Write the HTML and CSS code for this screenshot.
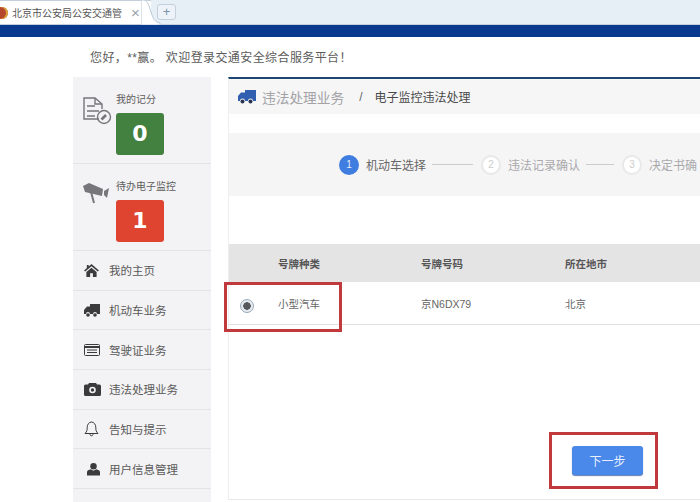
FILE: index.html
```html
<!DOCTYPE html>
<html lang="zh-CN">
<head>
	<meta charset="UTF-8">
	<title>北京市公安局公安交通管理局</title>
	<link rel="stylesheet" href="styles.css">
</head>
<body>
	<div class="tabbar">
		<div class="tab">
			<span class="favicon"></span>
			<span class="tab-title">北京市公安局公安交通管</span>
			<span class="tab-close">×</span>
			<svg class="tab-curve" width="20" height="25" viewBox="0 0 20 25"><path d="M0 0 H3 C7 1 8 6 10 12 C12 19 14 22 19 23 V25 H0 Z" fill="#fff" stroke="#b9c9d8"/></svg>
		</div>
		<div class="tab-new">+</div>
	</div>
	<div class="band"></div>
	<div class="welcome">您好，**赢。 欢迎登录交通安全综合服务平台！</div>

	<div class="page">
		<div class="side">
			<div class="stat">
				<svg class="stat-icon" width="30" height="32" viewBox="0 0 30 32" fill="none" stroke="#77767a" stroke-width="1.4">
					<path d="M17 23 H2 V2 H13 L20 8 V13"/>
					<path d="M13 2 V8 H20"/>
					<path d="M5 10 H13 M5 15 H17 M5 20 H13"/>
					<circle cx="22" cy="21" r="6.5"/>
					<path d="M19.5 23.5 L24 19" stroke-width="2.6"/>
				</svg>
				<div class="stat-body">
					<div class="stat-label">我的记分</div>
					<div class="stat-num green">0</div>
				</div>
			</div>
			<div class="stat">
				<svg class="stat-icon" width="30" height="32" viewBox="0 0 30 32">
					<path d="M1 3 L7 0 L21 6 L20 13 L3 9 Z" fill="#77767a"/>
					<path d="M9 9 L12 20" stroke="#77767a" stroke-width="2"/>
					<path d="M22 8 L27 5 L25 15 L22 12 Z" fill="#77767a"/>
				</svg>
				<div class="stat-body">
					<div class="stat-label">待办电子监控</div>
					<div class="stat-num red">1</div>
				</div>
			</div>
			<ul class="menu">
				<li>
					<svg width="15" height="13" viewBox="0 0 16 14"><path d="M8 0 L16 7 L14.800 8 L8 2.500 L1.200 8 L0 7 L3 4.400 V1 H5 V2.700 Z M8 4 L13.500 8.500 V14 H9.500 V10 H6.500 V14 H2.500 V8.500 Z" fill="#3b3b3d"/></svg>
					<span>我的主页</span>
				</li>
				<li>
					<svg width="16" height="13" viewBox="0 0 16 13"><path d="M6 0 H16 V10 H13 A2 2 0 0 0 9 10 H6 A2 2 0 0 0 2 10 H0 V6 L3 2.500 H6 Z" fill="#3b3b3d"/><circle cx="4" cy="11" r="1.800" fill="#3b3b3d"/><circle cx="11" cy="11" r="1.800" fill="#3b3b3d"/></svg>
					<span>机动车业务</span>
				</li>
				<li>
					<svg width="16" height="12" viewBox="0 0 16 12" fill="none" stroke="#3b3b3d"><rect x=".5" y=".5" width="15" height="11" rx="1"/><path d="M1 3 H15" stroke-width="2"/><path d="M3 6 H13 M3 8.500 H13"/></svg>
					<span>驾驶证业务</span>
				</li>
				<li>
					<svg width="17" height="14" viewBox="0 0 17 14"><path d="M5 1 H12 L13 2.500 H15.500 A1.500 1.500 0 0 1 17 4 V12.500 A1.500 1.500 0 0 1 15.500 14 H1.500 A1.500 1.500 0 0 1 0 12.500 V4 A1.500 1.500 0 0 1 1.500 2.500 H4 Z" fill="#3b3b3d"/><circle cx="8.500" cy="8" r="3.300" fill="#f3f2f4"/><circle cx="8.500" cy="8" r="1.700" fill="#3b3b3d"/></svg>
					<span>违法处理业务</span>
				</li>
				<li>
					<svg width="15" height="16" viewBox="0 0 15 16" fill="none" stroke="#3b3b3d"><path d="M1 12.500 C3 10.500 3.200 9 3.200 6.500 C3.200 3.500 5 1 7.500 1 C10 1 11.800 3.500 11.800 6.500 C11.800 9 12 10.500 14 12.500 Z"/><path d="M6 13 C6 15.500 9 15.500 9 13"/></svg>
					<span>告知与提示</span>
				</li>
				<li>
					<svg class="user" width="13" height="14" viewBox="0 0 14 14"><circle cx="7" cy="4" r="3.500" fill="#3b3b3d"/><path d="M0 14 V10.500 C0 8.500 2 7.800 4 7.300 L7 9 L10 7.300 C12 7.800 14 8.500 14 10.500 V14 Z" fill="#3b3b3d"/></svg>
					<span>用户信息管理</span>
				</li>
			</ul>
		</div>

		<div class="main">
			<div class="crumb">
				<svg width="18" height="14" viewBox="0 0 18 14"><path d="M7 0 H18 V11 H15 A2.500 2.500 0 0 0 10 11 H7 A2.500 2.500 0 0 0 2 11 H0 V6 L3 2.500 H7 Z" fill="#2f5fae"/><circle cx="4.500" cy="11.500" r="2" fill="#27344d"/><circle cx="12.500" cy="11.500" r="2" fill="#27344d"/></svg>
				<span class="crumb-parent">违法处理业务</span>
				<span class="crumb-sep">/</span>
				<span class="crumb-cur">电子监控违法处理</span>
			</div>
			<div class="steps">
				<span class="step-dot on">1</span><span class="step-txt on">机动车选择</span><span class="step-line long"></span>
				<span class="step-dot">2</span><span class="step-txt">违法记录确认</span><span class="step-line"></span>
				<span class="step-dot">3</span><span class="step-txt">决定书确</span>
			</div>
			<div class="tbl">
				<div class="tbl-head">
					<span class="col1">号牌种类</span><span class="col2">号牌号码</span><span>所在地市</span>
				</div>
				<div class="tbl-row">
					<span class="radio"></span>
					<span class="col1 first">小型汽车</span><span class="col2">京N6DX79</span><span>北京</span>
				</div>
				<div class="mark mark-row"></div>
			</div>
			<div class="actions">
				<button class="next">下一步</button>
				<div class="mark mark-btn"></div>
			</div>
		</div>
	</div>
</body>
</html>
```

FILE: styles.css
```css
*{
	margin: 0;
	padding: 0;
	box-sizing: border-box;
	list-style: none;
}
html,body{
	height: 502px;
	overflow: hidden;
}
body{
	width: 700px;
	background: #fff;
	font-family: "Liberation Sans", "Noto Sans CJK SC", sans-serif;
	color: #555;
}
.tabbar{
	height: 25px;
	background: #e6eff6;
	border-bottom: 1px solid #c3d0dc;
	display: flex;
	align-items: flex-end;
}
.tab{
	width: 151px;
	height: 24px;
	background: #fff;
	display: flex;
	align-items: center;
	position: relative;
	border-top: 1px solid #c3d0dc;
}
.favicon{
	width: 8px;
	height: 12px;
	margin-right: 4px;
	background: #b5482c;
	border-radius: 0 6px 6px 0;
	box-shadow: inset -2px 0 0 #d9a33c;
}
.tab-title{
	font-size: 10px;
	white-space: nowrap;
	color: #555;
}
.tab-close{
	margin-left: 9px;
	font-size: 15px;
	line-height: 1;
	color: #9aa3ab;
}
.tab-curve{
	position: absolute;
	left: 141px;
	top: -1px;
}
.tab-new{
	width: 19px;
	height: 16px;
	margin: 0 0 4px 6px;
	border: 1px solid #c3d0dc;
	border-radius: 3px;
	background: #edf3f8;
	color: #7d94a8;
	font-size: 13px;
	line-height: 13px;
	text-align: center;
}
.band{
	height: 12px;
	background: #0a3a8e;
}
.welcome{
	height: 40px;
	padding: 13px 0 0 90px;
	font-size: 12px;
	line-height: 17px;
	letter-spacing: .4px;
	color: #5b5b5b;
}
.page{
	display: flex;
	height: 425px;
	padding-left: 73px;
}
.side{
	width: 138px;
	background: #f3f2f4;
	flex-shrink: 0;
}
.stat{
	height: 87px;
	display: flex;
	padding: 16px 0 0 9px;
	border-bottom: 1px solid #e4e3e5;
}
.stat-body{
	margin-left: 4px;
}
.stat-label{
	font-size: 10px;
	line-height: 14px;
	color: #5d5d5d;
	white-space: nowrap;
}
.stat-num{
	width: 48px;
	height: 42px;
	margin-top: 6px;
	border-radius: 3px;
	color: #fff;
	font-family: "DejaVu Sans", sans-serif;
	font-size: 22px;
	font-weight: bold;
	line-height: 42px;
	text-align: center;
}
.green{
	background: #42813f;
}
.red{
	background: #df4431;
}
.stat-icon{
	flex-shrink: 0;
	margin-top: 3px;
}
.menu li{
	height: 39.7px;
	display: grid;
	grid-template-columns: 25px 1fr;
	align-items: center;
	padding-left: 11px;
	border-bottom: 1px solid #e4e3e5;
	font-size: 11.500px;
	color: #5a5a5a;
}
.menu .user{
	margin-left: 3px;
}
.main{
	margin-left: 17px;
	width: 472px;
	height: 423px;
	border-top: 2px solid #1d4673;
	border-left: 1px solid #eee;
	border-bottom: 1px solid #e8e8e8;
}
.crumb{
	height: 35px;
	background: #f6f6f7;
	display: flex;
	align-items: center;
	padding-left: 9px;
}
.crumb-parent{
	margin-left: 6px;
	font-size: 13.700px;
	color: #a3a3a6;
}
.crumb-sep{
	margin: 0 12px 0 15px;
	font-size: 12px;
	color: #666;
}
.crumb-cur{
	font-size: 12px;
	color: #4a4a4a;
}
.steps{
	height: 63px;
	margin-top: 19px;
	background: #f6f5f6;
	display: flex;
	align-items: center;
	padding-left: 110px;
	white-space: nowrap;
	overflow: hidden;
}
.step-dot{
	width: 20px;
	height: 20px;
	flex-shrink: 0;
	border-radius: 50%;
	border: 2px solid #e8e7ea;
	background: #fff;
	color: #ccc;
	font-size: 10px;
	line-height: 16px;
	text-align: center;
}
.step-dot.on{
	background: #3f7de0;
	border-color: #3f7de0;
	color: #e8f0ff;
}
.step-txt{
	margin-left: 7px;
	font-size: 12px;
	color: #a9a9ab;
}
.step-txt.on{
	color: #666;
}
.step-line{
	width: 28px;
	height: 1px;
	margin: 0 8px 0 6px;
	background: #ccc;
	flex-shrink: 0;
}
.step-line.long{
	width: 41px;
}
.tbl{
	margin-top: 48px;
	position: relative;
}
.tbl-head{
	height: 38px;
	background: #e5e4e5;
	display: flex;
	align-items: center;
	font-size: 10.500px;
	font-weight: bold;
	color: #555;
}
.tbl-row{
	height: 43px;
	display: flex;
	align-items: center;
	border-bottom: 1px solid #e2e2e2;
	font-size: 10.500px;
	color: #666;
}
.col1{
	margin-left: 49px;
	width: 143px;
}
.col2{
	width: 144px;
}
.col1.first{
	margin-left: 24px;
}
.radio{
	width: 14px;
	height: 14px;
	margin: 6px 0 0 11px;
	flex-shrink: 0;
	border-radius: 50%;
	border: 1px solid #98a8b8;
	background: radial-gradient(circle, #55595e 0 3.500px, #e6ebf0 4px);
}
.mark{
	position: absolute;
	border: 3px solid #c0393c;
}
.mark-row{
	left: -5px;
	top: 38px;
	width: 118px;
	height: 50px;
}
.actions{
	position: relative;
	padding: 121px 0 0 343px;
}
.next{
	width: 71px;
	height: 29px;
	border: 0;
	border-radius: 3px;
	background: #4a88ea;
	box-shadow: 0 1px 1px #5e7fb0;
	color: #e8f0ff;
	font-family: inherit;
	font-size: 12px;
}
.mark-btn{
	left: 320px;
	top: 107px;
	width: 109px;
	height: 57px;
}
```
